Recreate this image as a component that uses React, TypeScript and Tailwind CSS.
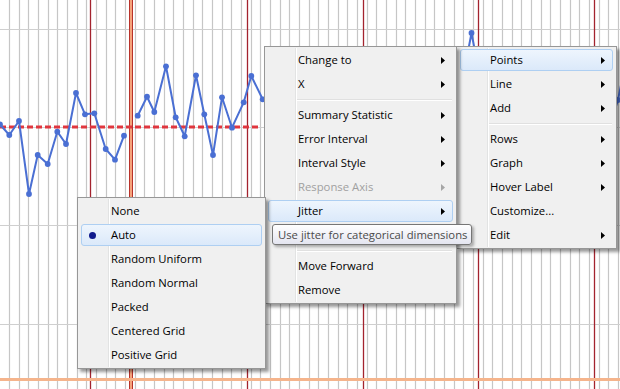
import React from 'react'

type MenuEntry =
  | { kind: 'item'; label: string; arrow?: boolean; disabled?: boolean; active?: boolean; bullet?: boolean }
  | { kind: 'sep' }

const font = { fontFamily: '"Open Sans", "Noto Sans", sans-serif' }

const pointsMenu: MenuEntry[] = [
  { kind: 'item', label: 'Change to', arrow: true },
  { kind: 'item', label: 'X', arrow: true },
  { kind: 'sep' },
  { kind: 'item', label: 'Summary Statistic', arrow: true },
  { kind: 'item', label: 'Error Interval', arrow: true },
  { kind: 'item', label: 'Interval Style', arrow: true },
  { kind: 'item', label: 'Response Axis', arrow: true, disabled: true },
  { kind: 'item', label: 'Jitter', arrow: true, active: true },
  { kind: 'item', label: '' },
  { kind: 'sep' },
  { kind: 'item', label: 'Move Forward' },
  { kind: 'item', label: 'Remove' },
]

const mainMenu: MenuEntry[] = [
  { kind: 'item', label: 'Points', arrow: true, active: true },
  { kind: 'item', label: 'Line', arrow: true },
  { kind: 'item', label: 'Add', arrow: true },
  { kind: 'sep' },
  { kind: 'item', label: 'Rows', arrow: true },
  { kind: 'item', label: 'Graph', arrow: true },
  { kind: 'item', label: 'Hover Label', arrow: true },
  { kind: 'item', label: 'Customize...' },
  { kind: 'item', label: 'Edit', arrow: true },
]

const jitterMenu: MenuEntry[] = [
  { kind: 'item', label: 'None' },
  { kind: 'item', label: 'Auto', active: true, bullet: true },
  { kind: 'item', label: 'Random Uniform' },
  { kind: 'item', label: 'Random Normal' },
  { kind: 'item', label: 'Packed' },
  { kind: 'item', label: 'Centered Grid' },
  { kind: 'item', label: 'Positive Grid' },
]

function Arrow({ disabled }: { disabled?: boolean }) {
  return (
    <svg className="mr-[7px] shrink-0" width="4" height="7" viewBox="0 0 4 7">
      <polygon points="0,0 4,3.5 0,7" fill={disabled ? '#a6a6a6' : '#000'} />
    </svg>
  )
}

function Menu({ entries, className }: { entries: MenuEntry[]; className: string }) {
  return (
    <div
      className={`absolute flex flex-col border border-[#979797] bg-[#f0f0f0] py-px shadow-[3px_3px_3px_rgba(0,0,0,0.4)] ${className}`}
      style={font}
    >
      {/* icon column divider */}
      <div className="absolute top-px bottom-px left-[30px] w-px bg-[#e2e3e3]" />
      <div className="absolute top-px bottom-px left-[31px] w-px bg-white" />
      {entries.map((e, i) =>
        e.kind === 'sep' ? (
          <div key={i} className="ml-[31px] mr-[4px] mt-[3px] mb-[2px] border-t border-b border-t-[#e0e0e0] border-b-white" />
        ) : (
          <div
            key={i}
            className={`relative mx-[3px] my-px flex h-[22px] items-center rounded-[3px] border ${
              e.active ? 'border-[#aecff2] bg-gradient-to-b from-[#eef5fd] to-[#dbe9fa]' : 'border-transparent'
            }`}
          >
            <div className="flex w-[26px] shrink-0 items-center pl-[7px]">
              {e.bullet && <span className="h-[7px] w-[7px] rounded-full bg-[#101a8c]" />}
            </div>
            <span
              className={`flex-1 pl-[3px] text-[11.3px] leading-none ${e.disabled ? 'text-[#a0a0a0]' : 'text-black'}`}
            >
              {e.label}
            </span>
            {e.arrow && <Arrow disabled={e.disabled} />}
          </div>
        )
      )}
    </div>
  )
}

const seg1 = [
  [-4, 124], [0, 124.5], [9.3, 135], [19, 121], [29, 194], [37.7, 155], [47.7, 164], [57.3, 131.7], [66, 144],
  [76, 93], [85, 114.3], [94.3, 113.3], [105.7, 149], [115, 159.7], [124, 135.7],
]
const seg2 = [
  [137.7, 115.7], [147, 96.7], [154.3, 112], [166, 66.3], [175.7, 117.3], [184.7, 136.3], [196, 75.3],
  [204.3, 114.3], [213, 155], [222, 97.3], [232, 127.7], [243.7, 102.3], [251.3, 76], [262.7, 99.3], [272, 90],
]
const seg3 = [[466, 62], [471.5, 33], [477, 62]]
const seg4 = [[610, 125], [618, 100], [624, 70]]

function Chart() {
  const gridX: number[] = []
  for (let k = 0; k < 70; k++) {
    const x = Math.round(9 + k * 9.667) + 0.5
    if (x < 620) gridX.push(x)
  }
  const redX = [90.5, 247.5, 363.5, 478.5, 594.5]
  const gridY = [29.5, 127.5, 225.5, 324.5]
  const line = (pts: number[][]) => pts.map((p) => p.join(',')).join(' ')
  return (
    <svg className="absolute inset-0" width="620" height="389" viewBox="0 0 620 389">
      {gridX.map((x) => (
        <line key={x} x1={x} x2={x} y1={0} y2={389} stroke="#c6c6c6" strokeWidth={1.2} />
      ))}
      {gridY.map((y) => (
        <line key={y} x1={0} x2={620} y1={y} y2={y} stroke="#cfcfcf" strokeWidth={1} />
      ))}
      {redX.map((x) => (
        <line key={x} x1={x} x2={x} y1={0} y2={389} stroke="#a3232e" strokeWidth={1.3} />
      ))}
      <rect x={129} y={0} width={4} height={389} fill="#f5a37c" />
      <line x1={129.5} x2={129.5} y1={0} y2={389} stroke="#b8322a" strokeWidth={1} />
      <line x1={132.5} x2={132.5} y1={0} y2={389} stroke="#b8322a" strokeWidth={1} />
      <line x1={0} x2={620} y1={379.5} y2={379.5} stroke="#f5b48c" strokeWidth={3} />
      <line x1={0} x2={260} y1={127} y2={127} stroke="#e0363e" strokeWidth={3} strokeDasharray="6 3" />
      {[seg1, seg2, seg3, seg4].map((s, i) => (
        <g key={i}>
          <polyline points={line(s)} fill="none" stroke="#4a6fd3" strokeWidth={2} strokeLinejoin="round" />
          {s.map((p, j) => (
            <circle key={j} cx={p[0]} cy={p[1]} r={2.9} fill="#4a6fd3" />
          ))}
        </g>
      ))}
    </svg>
  )
}

export default function App() {
  return (
    <div className="relative h-[389px] w-[620px] overflow-hidden bg-white">
      <Chart />
      <Menu entries={mainMenu} className="left-[456px] top-[46px] w-[161px]" />
      <Menu entries={pointsMenu} className="left-[264px] top-[46px] w-[193px]" />
      <Menu entries={jitterMenu} className="left-[77px] top-[197px] w-[189px]" />
      {/* tooltip */}
      <div
        className="absolute left-[272px] top-[224px] flex h-[21px] w-[200px] items-center rounded-[3px] border border-[#767676] bg-gradient-to-b from-white to-[#e4e5f0] pl-[5px] shadow-[2px_2px_3px_rgba(0,0,0,0.3)]"
        style={font}
      >
        <span className="text-[11.3px] leading-none text-[#4a4a4a]">Use jitter for categorical dimensions</span>
      </div>
    </div>
  )
}
